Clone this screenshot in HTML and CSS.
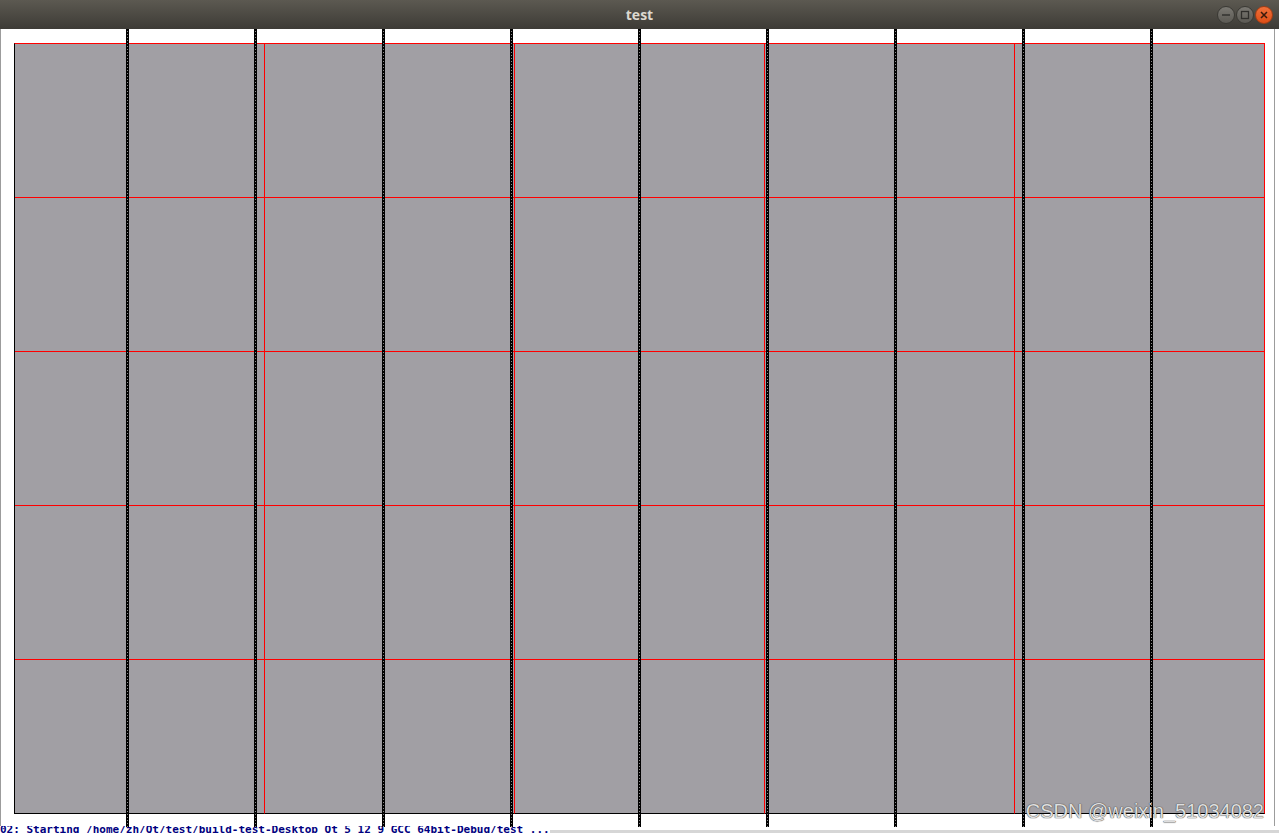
FILE: index.html
```html
<!DOCTYPE html>
<html lang="en">
<head>
<meta charset="UTF-8">
<title>test</title>
<link rel="stylesheet" href="styles.css">
</head>
<body>
<div class="titlebar">
    <span></span>
    <span class="title">test</span>
    <div class="controls">
        <a class="ctl min"><svg width="10" height="10" viewBox="0 0 10 10"><path d="M1 5h8" stroke="#2f2e2b" stroke-width="1.4"/></svg></a>
        <a class="ctl max"><svg width="10" height="10" viewBox="0 0 10 10"><rect x="1.5" y="1.5" width="7" height="7" fill="none" stroke="#2f2e2b" stroke-width="1.3"/></svg></a>
        <a class="ctl close"><svg width="10" height="10" viewBox="0 0 10 10"><path d="M2 2l6 6M8 2l-6 6" stroke="#3a1a0c" stroke-width="1.5"/></svg></a>
    </div>
</div>
<div class="client">
    <div class="grid">
        <div class="cell"></div><div class="cell"></div><div class="cell"></div><div class="cell"></div><div class="cell"></div>
        <div class="cell"></div><div class="cell"></div><div class="cell"></div><div class="cell"></div><div class="cell"></div>
        <div class="cell"></div><div class="cell"></div><div class="cell"></div><div class="cell"></div><div class="cell"></div>
        <div class="cell"></div><div class="cell"></div><div class="cell"></div><div class="cell"></div><div class="cell"></div>
        <div class="cell"></div><div class="cell"></div><div class="cell"></div><div class="cell"></div><div class="cell"></div>
    </div>
    <!-- 竖向辅助线, 间隔128 -->
    <div class="guides">
        <i></i><i></i><i></i><i></i><i></i><i></i><i></i><i></i><i></i>
    </div>
</div>
<div class="output">
    <span class="log">02: Starting /home/zh/Qt/test/build-test-Desktop_Qt_5_12_9_GCC_64bit-Debug/test ...</span>
    <span class="fill"></span>
</div>
<div class="watermark">CSDN @weixin_51034082</div>
</body>
</html>
```

FILE: styles.css
```css
body {
    margin: 0;
    width: 1279px;
    height: 833px;
    overflow: hidden;
    position: relative;
    background: #fff;
    font-family: "DejaVu Sans", sans-serif;
}
.titlebar {
    height: 29px;
    display: grid;
    grid-template-columns: 1fr auto 1fr;
    align-items: center;
    background: linear-gradient(#5c5951, #3d3b36);
}
.title {
    color: #dcd8cf;
    font: bold 14px/29px "Open Sans", "DejaVu Sans", sans-serif;
}
.controls {
    justify-self: end;
    display: flex;
    gap: 1px;
    padding-right: 6px;
}
.ctl {
    width: 18px;
    height: 18px;
    border-radius: 50%;
    display: flex;
    align-items: center;
    justify-content: center;
    box-sizing: border-box;
    border: 1px solid #3a3934;
    background: linear-gradient(#7a7872, #5b5953);
}
.close {
    border-color: #a33d14;
    background: linear-gradient(#f0703a, #de4e16);
}
.client {
    position: relative;
    height: 797px;
    width: 1275px;
    padding: 14px 0 0 13px;
    box-sizing: border-box;
    border-left: 1px solid #9c9c9c;
    border-right: 1px solid #9c9c9c;
}
.grid {
    display: grid;
    grid-template-columns: repeat(5, 250px);
    grid-template-rows: repeat(5, 154px);
    width: max-content;
    border-top: 1px solid #f00;
    border-left: 1px solid #000;
    background: #a19fa4;
}
.cell {
    border-right: 1px solid #f00;
    border-bottom: 1px solid #f00;
}
.cell:nth-child(n+21) {
    border-bottom-color: #000;
}
.guides {
    position: absolute;
    left: 0;
    top: 0;
    bottom: -1px;
    display: flex;
    gap: 125px;
    padding-left: 125px;
}
.guides i {
    width: 3px;
    background:
        linear-gradient(to right, #000 1px, transparent 1px, transparent 2px, #000 2px),
        repeating-linear-gradient(#000 0 2px, #8a8a8a 2px 3px);
}
.output {
    height: 7px;
    display: flex;
    overflow: hidden;
}
.log {
    margin-top: -2px;
    color: #00007f;
    white-space: nowrap;
    font: bold 11px/11px "DejaVu Sans Mono", monospace;
}
.fill {
    flex: 1;
    margin-top: 4px;
    background: #d6d6d6;
}
.watermark {
    position: absolute;
    right: 15px;
    bottom: 10px;
    color: #dedede;
    font: 20px "Liberation Sans", Arial, sans-serif;
    text-shadow: 0 0 1px #444, 0 0 1px #444;
}
```
